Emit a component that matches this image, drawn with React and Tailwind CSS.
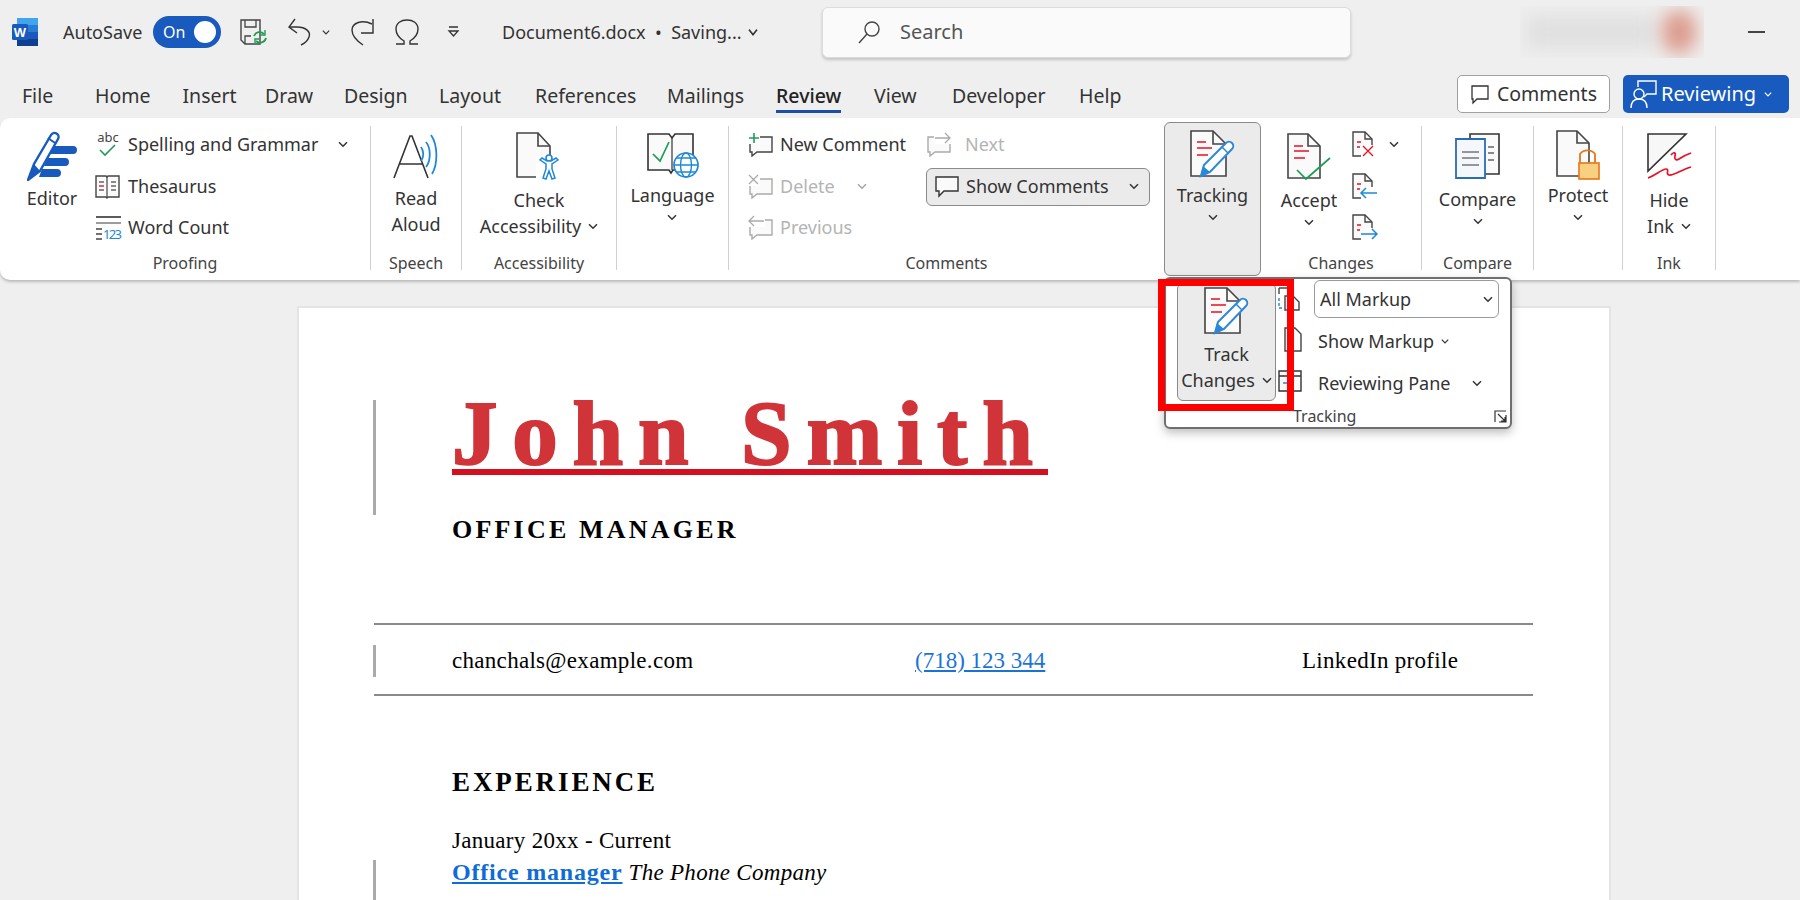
import React from 'react';

const Chev = ({ className = '', color = '#333', w = 10 }) => (
  <svg width={w} height="7" viewBox="0 0 10 7" className={`shrink-0 ${className}`}>
    <path d="M1 1.2l4 4 4-4" fill="none" stroke={color} strokeWidth="1.5" />
  </svg>
);

const Pencil = ({ dx = 0, dy = 0 }) => (
  <g transform={`translate(${dx} ${dy})`}>
    <path d="M11 46l3-11L36 13a4 4 0 0 1 6 6L20 42z" fill="#fff" stroke="#2b88d8" strokeWidth="2" />
    <path d="M10 47l3-11 7 6z" fill="#2b88d8" />
    <path d="M32 17l6 6" stroke="#2b88d8" strokeWidth="1.5" />
  </g>
);

const DocPath = ({ w = 36, h = 46 }) => (
  <>
    <path d={`M1 1h${w - 14}l13 13v${h - 14}H1z`} fill="#fafafa" stroke="#444" strokeWidth="1.6" />
    <path d={`M${w - 13} 1v13h13`} fill="none" stroke="#444" strokeWidth="1.6" />
  </>
);

const RedLines = () => (
  <path d="M7 12h9M7 18h15M7 25h11" stroke="#e81123" strokeWidth="1.5" fill="none" />
);

const TrackIcon = () => (
  <svg width="45" height="48" viewBox="0 0 45 48">
    <DocPath />
    <RedLines />
    <Pencil />
  </svg>
);

const SmallDoc = ({ children }) => (
  <svg width="26" height="27" viewBox="0 0 26 27">
    <path d="M1 1h12l7 7v17H1z" fill="#fafafa" stroke="#444" strokeWidth="1.4" />
    <path d="M13 1v7h7" fill="none" stroke="#444" strokeWidth="1.4" />
    <path d="M5 11h4M5 16h3" stroke="#e81123" strokeWidth="1.4" />
    <rect x="9" y="14" width="17" height="13" fill="#fff" />
    {children}
  </svg>
);

const Bubble = ({ color = '#444', children }) => (
  <svg width="25" height="25" viewBox="0 0 25 25">
    <path d="M2 5h22v15H9l-5 4v-4H2z" fill="#fafafa" stroke={color} strokeWidth="1.4" />
    {children}
  </svg>
);

const WordLogo = () => (
  <svg width="26" height="28" viewBox="0 0 26 28">
    <rect x="5" y="0" width="21" height="8" fill="#41a5ee" />
    <rect x="5" y="7" width="21" height="7" fill="#2b7cd3" />
    <rect x="5" y="14" width="21" height="7" fill="#185abd" />
    <rect x="5" y="21" width="21" height="7" fill="#103f91" />
    <rect x="0" y="6" width="16" height="16" rx="1.5" fill="#185abd" />
    <text x="8" y="19" textAnchor="middle" fontSize="13" fontWeight="700" fill="#fff" fontFamily="'Liberation Sans', sans-serif">W</text>
  </svg>
);

const EditorIcon = () => (
  <svg width="50" height="50" viewBox="0 0 50 50">
    <path d="M27 15h19a4 4 0 0 1 0 8H23zM21 27h17a4 4 0 0 1 0 8H17zM15 38h15a4 4 0 0 1 0 8H12z" fill="#185abd" />
    <path d="M1 49L7 33 24 4a4 4 0 0 1 7 4L13 40z" fill="#fff" stroke="#185abd" strokeWidth="2.4" />
    <path d="M1 49l6-16 6 7z" fill="#185abd" />
    <path d="M21 7l7 5" stroke="#185abd" strokeWidth="2" />
  </svg>
);

const AbcIcon = () => (
  <svg width="26" height="26" viewBox="0 0 26 26" className="overflow-visible">
    <text x="13" y="10" textAnchor="middle" fontSize="13" fill="#444" fontFamily="'Noto Sans', sans-serif">abc</text>
    <path d="M5 18l5 5 10-10" fill="none" stroke="#1f9d55" strokeWidth="1.6" />
  </svg>
);

const ThesaurusIcon = () => (
  <svg width="25" height="25" viewBox="0 0 25 25">
    <path d="M1 2h10l1 1 1-1h11v21H13l-1 1-1-1H1z" fill="#fafafa" stroke="#444" strokeWidth="1.4" />
    <path d="M12 3v20" stroke="#444" strokeWidth="1.2" />
    <path d="M4 8h5M4 16h5" stroke="#666" strokeWidth="1.3" />
    <path d="M4 12h5" stroke="#e81123" strokeWidth="1.4" />
    <path d="M16 8h5M16 12h5M16 16h5" stroke="#666" strokeWidth="1.3" />
  </svg>
);

const WordCountIcon = () => (
  <svg width="27" height="24" viewBox="0 0 27 24" className="overflow-visible">
    <path d="M1 1h25" stroke="#333" strokeWidth="1.6" />
    <path d="M1 7h25" stroke="#666" strokeWidth="1.3" />
    <path d="M1 13h6M1 18h6M1 23h6" stroke="#444" strokeWidth="1.3" />
    <text x="8" y="23" fontSize="13" fill="#1e88d8" fontFamily="'Noto Sans', sans-serif" textLength="19">123</text>
  </svg>
);

const ReadAloudIcon = () => (
  <svg width="46" height="46" viewBox="0 0 46 46">
    <path d="M1 45L17 3h2l16 42M7 31h23" fill="none" stroke="#333" strokeWidth="1.6" />
    <path d="M28 14c3 4 3 10 0 14M33 9c5 6 5 19 0 25M38 2c7 10 7 29 1 39" fill="none" stroke="#1e88d8" strokeWidth="1.8" />
  </svg>
);

const AccessibilityIcon = () => (
  <svg width="46" height="48" viewBox="0 0 46 48">
    <path d="M1 1h21l12 13v31H1z" fill="#fafafa" stroke="#444" strokeWidth="1.6" />
    <path d="M22 1v13h12" fill="none" stroke="#444" strokeWidth="1.6" />
    <path d="M20 24h26v24H20z" fill="#fff" />
    <circle cx="33" cy="26" r="3" fill="#fff" stroke="#1e88d8" strokeWidth="1.6" />
    <path d="M24 28l6 4v5l-3 9 3 1 3-8 3 8 3-1-3-9v-5l6-4-2-2-5 3h-4l-5-3z" fill="#fff" stroke="#1e88d8" strokeWidth="1.5" />
  </svg>
);

const LanguageIcon = () => (
  <svg width="52" height="46" viewBox="0 0 52 46">
    <path d="M1 2h21l3 4 3-4h18v36H26l-2 3-2-3H1z" fill="#fafafa" stroke="#333" strokeWidth="1.6" />
    <path d="M25 6v32" stroke="#333" strokeWidth="1.2" />
    <path d="M6 22l7 7L22 10" fill="none" stroke="#1f9d55" strokeWidth="1.7" />
    <circle cx="39" cy="33" r="12" fill="#fff" stroke="#1e88d8" strokeWidth="1.7" />
    <ellipse cx="39" cy="33" rx="5.5" ry="12" fill="none" stroke="#1e88d8" strokeWidth="1.4" />
    <path d="M27 33h24M29 26h20M29 40h20" stroke="#1e88d8" strokeWidth="1.4" />
  </svg>
);

const AcceptIcon = () => (
  <svg width="44" height="48" viewBox="0 0 44 48">
    <path d="M1 1h20l12 12v32H1z" fill="#fafafa" stroke="#444" strokeWidth="1.6" />
    <path d="M21 1v12h12" fill="none" stroke="#444" strokeWidth="1.6" />
    <path d="M7 13h9M7 18h15M7 25h11" stroke="#e81123" strokeWidth="1.5" />
    <path d="M10 37l9 9L43 25" fill="none" stroke="#1f9d55" strokeWidth="1.7" />
  </svg>
);

const CompareIcon = () => (
  <svg width="46" height="46" viewBox="0 0 46 46">
    <path d="M15 1h29v40H15z" fill="#fafafa" stroke="#333" strokeWidth="1.6" />
    <path d="M33 14h6M33 20h6M33 27h6" stroke="#666" strokeWidth="1.4" />
    <path d="M1 6h29v39H1z" fill="#f4f7fb" stroke="#2b6cb8" strokeWidth="1.8" />
    <path d="M7 19h17M7 25h17M7 32h17" stroke="#777" strokeWidth="1.6" />
  </svg>
);

const ProtectIcon = () => (
  <svg width="44" height="50" viewBox="0 0 44 50">
    <path d="M1 1h20l12 12v33H1z" fill="#fafafa" stroke="#444" strokeWidth="1.6" />
    <path d="M21 1v12h12" fill="none" stroke="#444" strokeWidth="1.6" />
    <path d="M24 33v-9a9 8 0 0 1 15 0v9" fill="none" stroke="#e8761a" strokeWidth="1.8" />
    <rect x="23" y="33" width="20" height="16" fill="#f7d081" stroke="#e8761a" strokeWidth="1.6" />
  </svg>
);

const InkIcon = () => (
  <svg width="45" height="46" viewBox="0 0 45 46">
    <path d="M1 1h38L1 38z" fill="#f7f7f7" stroke="#333" strokeWidth="1.6" />
    <path d="M24 22c3-4 5-2 4 1s1 5 4 3 6-4 12-6" fill="none" stroke="#e81123" strokeWidth="1.7" />
    <path d="M1 45c8-3 14-9 18-9s-1 5 3 6 12-5 22-8" fill="none" stroke="#e81123" strokeWidth="1.7" />
  </svg>
);

const text = "font-['Noto_Sans',sans-serif]";

const BigBtn = ({ icon, lines, pt = 'pt-[6px]', gap = 'mt-[6px]', chevBelow = false, chevInline = false }) => (
  <div className={`flex flex-col items-center ${pt}`}>
    {icon}
    <div className={`${gap} flex flex-col items-center text-[18px] leading-[26px] text-[#333]`}>
      {lines.map((l, i) => (
        <div key={l} className="flex items-center gap-[7px] whitespace-nowrap">
          {l}
          {chevInline && i === lines.length - 1 && <Chev />}
        </div>
      ))}
      {chevBelow && <Chev className="mt-[6px]" />}
    </div>
  </div>
);

const Row = ({ icon, label, muted, chev, chevGap, w = 'w-[32px]' }) => (
  <div className={`h-[41.5px] pb-[4px] flex items-center text-[18px] whitespace-nowrap ${muted ? 'text-[#b4b4b4]' : 'text-[#333]'}`}>
    <span className={`${w} shrink-0 flex items-center`}>{icon}</span>
    {label}
    {chev && <Chev className={chevGap} color={muted ? '#a5a5a5' : '#333'} />}
  </div>
);

const Group = ({ width, label, children, sep = true }) => (
  <div className={`${width} h-[144px] shrink-0 flex flex-col ${sep ? 'border-r border-[#d0d0d0]' : ''}`}>
    <div className="flex-1 flex min-h-0">{children}</div>
    <div className="h-[20px] -mb-[3px] text-center text-[16px] leading-[20px] text-[#444]">{label}</div>
  </div>
);

const tabs = [
  ['File', 'w-[73px]'],
  ['Home', 'w-[87.5px]'],
  ['Insert', 'w-[82.5px]'],
  ['Draw', 'w-[79px]'],
  ['Design', 'w-[95px]'],
  ['Layout', 'w-[96px]'],
  ['References', 'w-[132px]'],
  ['Mailings', 'w-[109px]'],
  ['Review', 'w-[98px]'],
  ['View', 'w-[78px]'],
  ['Developer', 'w-[127px]'],
  ['Help', 'w-[60px]'],
];

const serif = "font-['Liberation_Serif',serif]";

export default function App() {
  return (
    <div className={`h-[900px] w-[1800px] overflow-hidden relative bg-[#efefef] ${text}`}>
      {/* Title bar */}
      <div className="h-[64px] flex items-center pl-[12px] text-[#333]">
        <WordLogo />
        <span className="ml-[25px] w-[90px] text-[18px]">AutoSave</span>
        <div className="w-[68px] h-[32px] rounded-full bg-[#185abd] flex items-center justify-between pl-[10px] pr-[5px] text-white text-[16px]">
          On
          <span className="w-[22px] h-[22px] rounded-full bg-white" />
        </div>
        <svg className="ml-[19px]" width="28" height="26" viewBox="0 0 28 26">
          <path d="M1 1h19v24H5l-4-4z" fill="none" stroke="#444" strokeWidth="1.4" />
          <path d="M5 1v7h11V1M5 25v-8h6" fill="none" stroke="#444" strokeWidth="1.3" />
          <path d="M14 17a6 6 0 0 1 10-2M26 19a6 6 0 0 1-10 3" fill="none" stroke="#1f9d55" strokeWidth="1.8" />
          <path d="M25 11v5h-4M15 25v-5h4" fill="none" stroke="#1f9d55" strokeWidth="1.4" />
        </svg>
        <svg className="ml-[20px]" width="24" height="28" viewBox="0 0 24 28">
          <path d="M1 9h8c9 0 14 5 12 10-1 3-4 6-8 8" fill="none" stroke="#333" strokeWidth="1.4" />
          <path d="M7 1L1 9l8 6" fill="none" stroke="#333" strokeWidth="1.4" />
        </svg>
        <Chev className="ml-[10px]" w={8} />
        <svg className="ml-[20px]" width="24" height="28" viewBox="0 0 24 28">
          <path d="M22 6C12 1 2 5 2 12c0 5 5 11 11 15" fill="none" stroke="#333" strokeWidth="1.4" />
          <path d="M23 1v14H11" fill="none" stroke="#333" strokeWidth="1.4" />
        </svg>
        <svg className="ml-[21px]" width="24" height="26" viewBox="0 0 24 26">
          <path d="M1 25h8v-3C4 19 1 15 1 10 1 4 6 1 12 1s11 3 11 9c0 5-3 9-8 12v3h8" fill="none" stroke="#333" strokeWidth="1.4" />
        </svg>
        <svg className="ml-[28px]" width="13" height="12" viewBox="0 0 13 12">
          <path d="M2 1h9M2 5h9l-4.500 5z" fill="none" stroke="#333" strokeWidth="1.3" />
        </svg>
        <div className="ml-[42px] w-[320px] flex items-center text-[18px]">
          <span className="w-[244px] whitespace-nowrap">Document6.docx&nbsp; •&nbsp; Saving...</span>
          <Chev w={14} className="scale-y-125" />
        </div>
        <div className="w-[529px] h-[51px] bg-[#fafafa] border border-[#dcdcdc] rounded-[6px] shadow-[0_2px_3px_rgba(0,0,0,0.18)] flex items-center pl-[34px]">
          <svg width="24" height="24" viewBox="0 0 24 24">
            <circle cx="15" cy="9" r="7" fill="none" stroke="#444" strokeWidth="1.4" />
            <path d="M10 14L2 23" stroke="#444" strokeWidth="1.4" />
          </svg>
          <span className="ml-[19px] text-[20px] text-[#555]">Search</span>
        </div>
        <div className="ml-[169px] w-[184px] h-[52px] flex items-center overflow-hidden">
          <div className="w-[130px] h-[34px] ml-[6px] bg-[#e0e0e0] blur-[9px]" />
          <div className="w-[34px] h-[44px] ml-[6px] rounded-full bg-[#dc9c8e] blur-[9px]" />
        </div>
        <div className="ml-[44px] w-[17px] h-[2px] bg-[#444]" />
      </div>

      {/* Tabs */}
      <div className="h-[54px] flex items-start pl-[22px] text-[19.5px] text-[#333]">
        <div className="flex pt-[18px]">
          {tabs.map(([t, w]) => (
            <div key={t} className={`${w} leading-[28px]`}>
              <span className={`inline-block h-[31px] ${t === 'Review' ? 'border-b-[3px] border-[#1b4fa8] font-medium text-[#222]' : ''}`}>{t}</span>
            </div>
          ))}
        </div>
        <div className="ml-auto mr-[11px] mt-[11px] flex gap-[13px]">
          <div className="w-[153px] h-[38px] bg-white border border-[#a0a0a0] rounded-[5px] flex items-center justify-center gap-[7px] text-[19.5px]">
            <svg width="20" height="22" viewBox="0 0 20 22">
              <path d="M2 3h16v13H7l-4 4v-4H2z" fill="none" stroke="#333" strokeWidth="1.3" />
            </svg>
            Comments
          </div>
          <div className="w-[166px] h-[38px] bg-[#185abd] rounded-[5px] flex items-center pl-[7px] gap-[3px] text-[20px] text-white">
            <svg width="28" height="30" viewBox="0 0 28 30">
              <path d="M8 8V2h18v13h-9l-3 3" fill="none" stroke="#fff" strokeWidth="1.4" />
              <circle cx="9" cy="15" r="5" fill="none" stroke="#fff" strokeWidth="1.4" />
              <path d="M1 29c0-6 3-9 8-9s8 3 8 9" fill="none" stroke="#fff" strokeWidth="1.4" />
            </svg>
            Reviewing
            <Chev color="#fff" w={8} className="ml-[5px]" />
          </div>
        </div>
      </div>

      {/* Ribbon */}
      <div className="h-[162px] bg-white rounded-l-[10px] shadow-[0_2px_3px_rgba(0,0,0,0.22)] flex pt-[8px]">
        <Group width="w-[371px]" label="Proofing">
          <div className="ml-[20px] w-[64px]">
            <BigBtn icon={<EditorIcon />} lines={['Editor']} pt="pt-[5px]" gap="mt-[4px]" />
          </div>
          <div className="ml-[11px]">
            <Row icon={<AbcIcon />} label="Spelling and Grammar" chev chevGap="ml-[20px]" w="w-[33px]" />
            <Row icon={<ThesaurusIcon />} label="Thesaurus" w="w-[33px]" />
            <Row icon={<WordCountIcon />} label="Word Count" w="w-[33px]" />
          </div>
        </Group>
        <Group width="w-[91px]" label="Speech">
          <div className="w-full"><BigBtn icon={<ReadAloudIcon />} lines={['Read', 'Aloud']} pt="pt-[7px]" gap="mt-[6px]" /></div>
        </Group>
        <Group width="w-[155px]" label="Accessibility">
          <div className="w-full"><BigBtn icon={<AccessibilityIcon />} lines={['Check', 'Accessibility']} pt="pt-[6px]" gap="mt-[7px]" chevInline /></div>
        </Group>
        <Group width="w-[112px]" label="">
          <div className="w-full"><BigBtn icon={<LanguageIcon />} lines={['Language']} pt="pt-[6px]" gap="mt-[4px]" chevBelow /></div>
        </Group>
        <Group width="w-[435px]" label="Comments" sep={false}>
          <div className="ml-[19px] w-[178px]">
            <Row label="New Comment" icon={<Bubble><rect x="0" y="0" width="12" height="12" fill="#fff" /><path d="M6 1v10M1 6h10" stroke="#1f9d55" strokeWidth="1.6" /></Bubble>} />
            <Row muted label="Delete" chev chevGap="ml-[22px]" icon={<Bubble color="#aaa"><rect x="0" y="0" width="12" height="12" fill="#fff" /><path d="M1 1l9 9M10 1l-9 9" stroke="#aaa" strokeWidth="1.3" /></Bubble>} />
            <Row muted label="Previous" icon={<Bubble color="#aaa"><rect x="0" y="0" width="17" height="12" fill="#fff" /><path d="M1 6h15M6 1L1 6l5 5" fill="none" stroke="#aaa" strokeWidth="1.3" /></Bubble>} />
          </div>
          <div className="flex flex-col">
            <Row muted label="Next" w="w-[39px]" icon={<Bubble color="#aaa"><rect x="8" y="0" width="17" height="12" fill="#fff" /><path d="M9 6h15M19 1l5 5-5 5" fill="none" stroke="#aaa" strokeWidth="1.3" /></Bubble>} />
            <div className="w-[224px] h-[38px] bg-[#ebebeb] border border-[#8a8a8a] rounded-[6px] flex items-center pl-[8px] text-[18px] text-[#333]">
              <span className="w-[31px]"><svg width="24" height="23" viewBox="0 0 24 23"><path d="M1 2h22v14H9l-5 5v-5H1z" fill="#fafafa" stroke="#333" strokeWidth="1.4" /></svg></span>
              Show Comments
              <Chev className="ml-auto mr-[10px]" />
            </div>
          </div>
        </Group>
        <div className="w-[97px] h-[154px] -mt-[4px] shrink-0 bg-[#ebebeb] border border-[#8a8a8a] rounded-[6px]">
          <BigBtn icon={<TrackIcon />} lines={['Tracking']} pt="pt-[7px]" gap="mt-[4px]" chevBelow />
        </div>
        <Group width="w-[161px]" label="Changes">
          <div className="ml-[26px] w-[44px]"><BigBtn icon={<AcceptIcon />} lines={['Accept']} pt="pt-[7px]" gap="mt-[6px]" chevBelow /></div>
          <div className="ml-[21px]">
            <Row w="w-[34px]" chev chevGap="ml-[3px]" icon={<SmallDoc><path d="M11 15l10 10M21 15L11 25" stroke="#e81123" strokeWidth="1.4" /></SmallDoc>} />
            <Row w="w-[34px]" icon={<SmallDoc><path d="M9 20h16M14 15l-5 5 5 5" fill="none" stroke="#1e88d8" strokeWidth="1.5" /></SmallDoc>} />
            <Row w="w-[34px]" icon={<SmallDoc><path d="M9 20h16M20 15l5 5-5 5" fill="none" stroke="#1e88d8" strokeWidth="1.5" /></SmallDoc>} />
          </div>
        </Group>
        <Group width="w-[112px]" label="Compare">
          <div className="w-full"><BigBtn icon={<CompareIcon />} lines={['Compare']} pt="pt-[7px]" gap="mt-[7px]" chevBelow /></div>
        </Group>
        <Group width="w-[89px]" label="">
          <div className="w-full"><BigBtn icon={<ProtectIcon />} lines={['Protect']} pt="pt-[4px]" gap="mt-[2px]" chevBelow /></div>
        </Group>
        <Group width="w-[93px]" label="Ink">
          <div className="w-full"><BigBtn icon={<InkIcon />} lines={['Hide', 'Ink']} pt="pt-[7px]" gap="mt-[8px]" chevInline /></div>
        </Group>
      </div>

      {/* Document page */}
      <div className={`mt-[26px] ml-[297px] w-[1314px] h-[700px] bg-white border-2 border-[#e4e4e4] ${serif} text-black`}>
        <div className="mt-[92px] ml-[74px] h-[115px] border-l-[3px] border-[#aaaaaa] pl-[76px]">
          <div className="w-[596px] h-[75px] border-b-[6px] border-[#d40f1f] text-[91px] leading-[68px] font-bold tracking-[14.8px] text-[#d13438] [-webkit-text-stroke:2px_#d13438] whitespace-nowrap">
            John Smith
          </div>
        </div>
        <div className="ml-[153px] text-[26px] leading-[30px] font-bold tracking-[3.2px]">OFFICE MANAGER</div>
        <div className="ml-[75px] w-[1159px] mt-[78px] h-[73px] border-y-2 border-[#8a8a8a] flex items-center">
          <div className="h-[32px] w-full border-l-[3px] -ml-[1px] mt-[3px] border-[#aaaaaa] pl-[76px] flex items-center text-[23px] tracking-[0.3px]">
            <span className="w-[463px]">chanchals@example.com</span>
            <span className="w-[387px] tracking-normal text-[#1a73d8] underline">(718) 123 344</span>
            <span>LinkedIn profile</span>
          </div>
        </div>
        <div className="ml-[153px] mt-[70px] text-[27px] leading-[32px] font-bold tracking-[2.9px]">EXPERIENCE</div>
        <div className="ml-[153px] mt-[29px] text-[23px] tracking-[0.3px] leading-[28px]">January 20xx - Current</div>
        <div className="ml-[74px] mt-[5px] border-l-[3px] border-[#aaaaaa] pl-[76px] text-[23px] tracking-[0.3px] leading-[24px] h-[60px]">
          <span className="font-bold text-[24px] tracking-[0.8px] text-[#0f6cd6] underline">Office manager</span>{' '}
          <span className="italic">The Phone Company</span>
        </div>
      </div>

      {/* Tracking dropdown */}
      <div className="absolute left-[1164px] top-[277px] w-[348px] h-[152px] bg-white border-2 border-[#6f6f6f] rounded-[6px] shadow-[0_4px_10px_rgba(0,0,0,0.25)] text-[18px] text-[#333]">
        <div className="flex">
          <div className="ml-[11px] mt-[4px] w-[99px] h-[118px] shrink-0 bg-[#ebebeb] border border-[#8a8a8a] rounded-[6px]">
            <BigBtn icon={<TrackIcon />} lines={['Track', 'Changes']} pt="pt-[3px]" gap="mt-[6px]" chevInline />
          </div>
          <div className="pl-[8px] flex-1 relative">
            <div className="h-[39px] pl-[30px] pt-[1px] flex">
              <div className="w-[185px] h-[38px] bg-white border border-[#9a9a9a] rounded-[6px] flex items-center px-[5px]">
                All Markup
                <Chev className="ml-auto" />
              </div>
            </div>
            <div className="h-[42px] pl-[34px] pt-[4px] flex items-center gap-[7px]">
              Show Markup <Chev w={8} />
            </div>
            <div className="h-[42px] pl-[34px] pt-[4px] flex items-center">
              Reviewing Pane <Chev className="ml-[21px]" />
            </div>
            <span className="absolute left-[2px] top-[8px]"><svg width="23" height="24" viewBox="0 0 23 24"><path d="M1 1h10M1 1v6" fill="none" stroke="#444" strokeWidth="1.4" /><path d="M1 11v10h4" fill="none" stroke="#1e88d8" strokeWidth="1.4" strokeDasharray="3 2" /><path d="M7 9h8l6 6v8H7z" fill="#fff" stroke="#444" strokeWidth="1.4" /><path d="M10 15h4M10 19h6" stroke="#e81123" strokeWidth="1.3" /></svg></span>
            <span className="absolute left-[8px] top-[48px]"><svg width="18" height="25" viewBox="0 0 18 25"><path d="M1 1h10l6 6v17H1z" fill="#fafafa" stroke="#444" strokeWidth="1.4" /><path d="M4 12h4M4 17h6" stroke="#e81123" strokeWidth="1.3" /></svg></span>
            <span className="absolute left-[2px] top-[91px]"><svg width="24" height="22" viewBox="0 0 24 22"><path d="M1 1h22v20H1zM1 6h22" fill="#fafafa" stroke="#333" strokeWidth="1.4" /><path d="M5 13h9M11 10l3 3-3 3" fill="none" stroke="#1e88d8" strokeWidth="1.5" /></svg></span>
          </div>
        </div>
        <div className="h-[24px] mt-[2px] flex items-center pl-[127px] pr-[3px] text-[16px] text-[#444]">
          Tracking
          <svg className="ml-auto" width="13" height="13" viewBox="0 0 13 13">
            <path d="M1 12V1h11v0M12 5v7H5M4 4l7 7M11 7v4H7" fill="none" stroke="#333" strokeWidth="1.2" />
          </svg>
        </div>
      </div>

      {/* Red annotation */}
      <div className="absolute left-[1158px] top-[279px] w-[136px] h-[132px] border-[7px] border-[#fe0000] pointer-events-none" />
    </div>
  );
}
